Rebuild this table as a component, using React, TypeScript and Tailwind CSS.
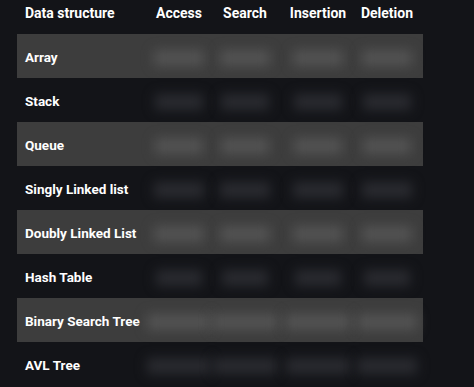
const rows = [
  { name: 'Array', w: 'w-[50px]' },
  { name: 'Stack', w: 'w-[48px]' },
  { name: 'Queue', w: 'w-[48px]' },
  { name: 'Singly Linked list', w: 'w-[50px]' },
  { name: 'Doubly Linked List', w: 'w-[50px]' },
  { name: 'Hash Table', w: 'w-[46px]' },
  { name: 'Binary Search Tree', w: 'w-[66px]' },
  { name: 'AVL Tree', w: 'w-[64px]' },
];

const cols = ['Access', 'Search', 'Insertion', 'Deletion'];

export default function App() {
  return (
    <div
      className="w-[474px] h-[387px] overflow-hidden bg-[#131418] text-white pl-[17px] pr-[51px]"
      style={{ fontFamily: 'Roboto, "Liberation Sans", sans-serif' }}
    >
      <div className="grid grid-cols-[130px_64px_68px_78px_60px] h-[34px] items-center pb-[7px] text-[14px] font-bold">
        <div className="pl-[8px] whitespace-nowrap">Data structure</div>
        {cols.map((c) => (
          <div key={c} className="text-center">{c}</div>
        ))}
      </div>
      {rows.map((r, i) => {
        const striped = i % 2 === 0;
        return (
          <div
            key={r.name}
            className={`grid grid-cols-[130px_64px_68px_78px_60px] h-[44px] items-center pt-[3px] text-[13.5px] font-bold ${striped ? 'bg-[#3d3d3d]' : ''}`}
          >
            <div className="pl-[8px] whitespace-nowrap">{r.name}</div>
            {cols.map((c) => (
              <div key={c} className="flex justify-center">
                <div
                  className={`h-[16px] ${r.w} blur-[6px] ${striped ? 'bg-[#535353]' : 'bg-[#2a2b30]'}`}
                />
              </div>
            ))}
          </div>
        );
      })}
    </div>
  );
}
